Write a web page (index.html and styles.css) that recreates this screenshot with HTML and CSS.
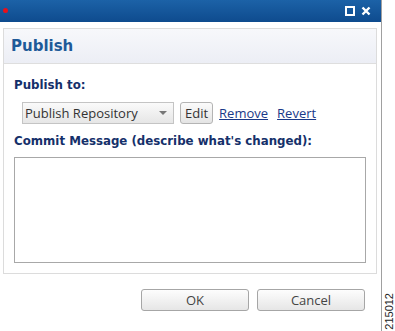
FILE: index.html
```html
<!DOCTYPE html>
<html lang="en">
<head>
  <meta charset="UTF-8">
  <title>Publish</title>
  <link rel="stylesheet" href="styles.css">
</head>
<body>
  <div class="page">
    <div class="window">
      <div class="titlebar">
        <span class="dot"></span>
        <div class="tools">
          <span class="max"></span>
          <svg class="close" width="10" height="10" viewBox="0 0 10 10">
            <path d="M1.5 1.5 L8.5 8.5 M8.5 1.5 L1.5 8.5" stroke="#fff" stroke-width="2.4"/>
          </svg>
        </div>
      </div>
      <div class="panel">
        <div class="panel-head">Publish</div>
        <div class="panel-body">
          <div class="label">Publish to:</div>
          <div class="repo-row">
            <div class="select">
              <span>Publish Repository</span>
              <span class="arrow"></span>
            </div>
            <button class="btn-small">Edit</button>
            <a href="#" class="link">Remove</a>
            <a href="#" class="link">Revert</a>
          </div>
          <div class="label">Commit Message (describe what's changed):</div>
          <textarea class="message"></textarea>
        </div>
      </div>
      <div class="footer">
        <button class="btn">OK</button>
        <button class="btn">Cancel</button>
      </div>
    </div>
    <div class="figno">215012</div>
  </div>
</body>
</html>
```

FILE: styles.css
```css
body {
  margin: 0;
  background-color: #fff;
  font-family: 'DejaVu Sans', Verdana, sans-serif;
}
.page {
  position: relative;
  width: 395px;
  height: 331px;
}
.window {
  width: 381px;
  height: 331px;
  border-right: 1px solid #a0a0a0;
}
.titlebar {
  height: 22px;
  background: linear-gradient(#1c62a7, #0e4b8e);
  display: flex;
  align-items: center;
  justify-content: space-between;
  padding: 0 10px 0 3px;
}
.dot {
  width: 5px;
  height: 5px;
  border-radius: 50%;
  background-color: #e8101a;
  margin-top: -2px;
}
.tools {
  display: flex;
  align-items: center;
  gap: 6px;
}
.max {
  width: 6px;
  height: 6px;
  border: 2px solid #fff;
}
.panel {
  margin: 6px 4px 0 3px;
  border: 1px solid #dcdcdc;
  height: 244px;
}
.panel-head {
  height: 34px;
  line-height: 34px;
  padding-left: 7px;
  background: linear-gradient(#f7f8fb, #eceef5);
  border-bottom: 1px solid #dedede;
  color: #1e5a98;
  font-weight: bold;
  font-size: 15px;
}
.panel-body {
  padding: 14px 10px 0 10px;
}
.label {
  color: #15306a;
  font-weight: bold;
  font-size: 11.8px;
}
.repo-row {
  display: flex;
  align-items: center;
  margin: 10px 0 10px 8px;
  font-family: 'Open Sans', sans-serif;
  font-size: 13px;
}
.select {
  width: 148px;
  height: 20px;
  border: 1px solid #c4c4c4;
  background: linear-gradient(#fafafa, #e6e6e6);
  display: flex;
  align-items: center;
  justify-content: space-between;
  padding-left: 2px;
  color: #333;
}
.arrow {
  width: 0;
  height: 0;
  border-left: 4px solid transparent;
  border-right: 4px solid transparent;
  border-top: 4px solid #777;
  margin-right: 6px;
}
.btn-small {
  margin-left: 6px;
  height: 22px;
  padding: 0 4px;
  border: 1px solid #b4b4b4;
  border-radius: 3px;
  background: linear-gradient(#fbfbfb, #e4e4e4);
  font-family: 'Open Sans', sans-serif;
  font-size: 13px;
  color: #333;
}
.link {
  margin-left: 6px;
  color: #1a3988;
  text-decoration: underline;
}
.link + .link {
  margin-left: 9px;
}
.message {
  display: block;
  margin-top: 9px;
  width: 352px;
  height: 106px;
  box-sizing: border-box;
  border: 1px solid #a8a8a8;
  resize: none;
}
.footer {
  display: flex;
  justify-content: flex-end;
  gap: 8px;
  padding: 15px 16px 0 0;
}
.btn {
  width: 108px;
  height: 22px;
  border: 1px solid #a6a6a6;
  border-radius: 3px;
  background: linear-gradient(#fdfdfd, #e6e6e6);
  font-family: 'Open Sans', sans-serif;
  font-size: 13px;
  color: #444;
}
.figno {
  position: absolute;
  left: 383px;
  top: 293px;
  writing-mode: vertical-rl;
  transform: rotate(180deg);
  font-family: 'Liberation Sans', sans-serif;
  font-size: 11px;
  line-height: 12px;
  color: #222;
}
```
